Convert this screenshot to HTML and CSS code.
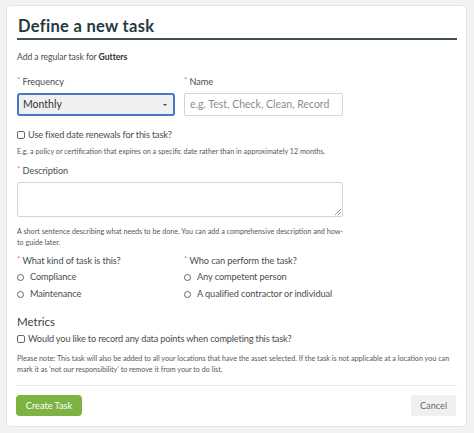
FILE: index.html
```html
<!DOCTYPE html>
<html>
<head>
<meta charset="utf-8">
<link rel="stylesheet" href="styles.css">
</head>
<body>
<div class="card">
  <h1 class="title">Define a new task</h1>
  <p class="intro">Add a regular task for <b>Gutters</b></p>

  <div class="grid2 row-fields">
    <div class="field">
      <div class="label"><span class="req">*</span> Frequency</div>
      <div class="select">Monthly<span class="caret"></span></div>
    </div>
    <div class="field">
      <div class="label"><span class="req">*</span> Name</div>
      <div class="input placeholder">e.g. Test, Check, Clean, Record</div>
    </div>
  </div>

  <div class="check row-fixed"><span class="box"></span>Use fixed date renewals for this task?</div>
  <p class="hint hint-fixed">E.g. a policy or certification that expires on a specific date rather than in approximately 12 months.</p>

  <div class="label label-desc"><span class="req">*</span> Description</div>
  <div class="textarea"><span class="grip"></span></div>
  <p class="hint hint-desc">A short sentence describing what needs to be done. You can add a comprehensive description and how-to guide later.</p>

  <div class="grid2 row-radios">
    <div class="field">
      <div class="label"><span class="req">*</span> What kind of task is this?</div>
      <div class="radio"><span class="dot"></span>Compliance</div>
      <div class="radio"><span class="dot"></span>Maintenance</div>
    </div>
    <div class="field">
      <div class="label"><span class="req">*</span> Who can perform the task?</div>
      <div class="radio"><span class="dot"></span>Any competent person</div>
      <div class="radio"><span class="dot"></span>A qualified contractor or individual</div>
    </div>
  </div>

  <h2 class="section">Metrics</h2>
  <div class="check row-metrics"><span class="box"></span>Would you like to record any data points when completing this task?</div>
  <p class="hint hint-note">Please note: This task will also be added to all your locations that have the asset selected. If the task is not applicable at a location you can mark it as 'not our responsibility' to remove it from your to do list.</p>

  <div class="actions">
    <button class="btn btn-primary">Create Task</button>
    <button class="btn btn-cancel">Cancel</button>
  </div>
</div>
</body>
</html>
```
FILE: styles.css
```css
* { box-sizing: border-box; }
html, body { margin: 0; padding: 0; }
body {
  background: #f2f2f2;
  font-family: "Lato", "Noto Sans", sans-serif;
  color: #4a4d50;
  width: 474px;
  height: 433px;
  overflow: hidden;
}
.card {
  margin: 5px 7px 0 6px;
  height: 422px;
  background: #fff;
  border: 1px solid #e3e3e3;
  border-radius: 4px;
  padding: 9px 9px 0 10px;
}
.title {
  margin: 0;
  font-size: 16.5px;
  line-height: 23px;
  font-weight: 700;
  color: #1f3a40;
  border-bottom: 2px solid #3f5157;
  padding-left: 1px;
  letter-spacing: 0.3px;
}
.intro {
  margin: 10px 0 0;
  font-size: 8.6px;
  line-height: 14px;
  letter-spacing: -0.05px;
}
.intro b { color: #2b3033; }
.grid2 {
  display: grid;
  grid-template-columns: 158px 159px;
  column-gap: 9px;
}
.row-fields { margin-top: 9px; }
.label {
  font-size: 9.2px;
  line-height: 14px;
  letter-spacing: -0.1px;
  color: #4a4d50;
}
.req { color: #e07a7a; font-size: 8px; vertical-align: 2px; }
.select, .input {
  margin-top: 4px;
  height: 23px;
  font-size: 10.5px;
  line-height: 19px;
  padding: 0 5px;
  border-radius: 3px;
}
.select {
  position: relative;
  background: #f0f0f0;
  border: 2px solid #4778c4;
  color: #2f3336;
  padding-left: 4px;
}
.caret {
  position: absolute;
  right: 6px;
  top: 9px;
  width: 0; height: 0;
  border-left: 2px solid transparent;
  border-right: 2px solid transparent;
  border-top: 2px solid #444;
}
.input {
  border: 1px solid #d5d5d5;
  line-height: 21px;
  border-radius: 2px;
}
.placeholder { color: #8a8d90; }
.check {
  display: flex;
  align-items: center;
  font-size: 9.2px;
  line-height: 14px;
  letter-spacing: -0.15px;
  color: #4a4d50;
}
.box {
  width: 8px; height: 8px;
  border: 1px solid #666;
  border-radius: 2px;
  margin-right: 3px;
  flex: none;
}
.row-fixed { margin-top: 12px; }
.hint {
  margin: 0;
  font-size: 7.2px;
  line-height: 11px;
  color: #55595c;
}
.hint-fixed { margin-top: 4px; }
.label-desc { margin-top: 5px; }
.textarea {
  position: relative;
  margin-top: 4px;
  width: 326px;
  height: 35px;
  border: 1px solid #d5d5d5;
  border-radius: 2px;
}
.grip {
  position: absolute;
  right: 1px; bottom: 1px;
  width: 6px; height: 6px;
  background: linear-gradient(135deg, transparent 45%, #999 45%, #999 55%, transparent 55%, transparent 72%, #999 72%, #999 82%, transparent 82%);
}
.hint-desc { margin-top: 9px; width: 330px; }
.row-radios { margin-top: 4px; }
.radio {
  display: flex;
  align-items: center;
  margin-top: 3px;
  font-size: 9.2px;
  line-height: 14px;
  letter-spacing: -0.1px;
}
.label + .radio { margin-top: 2px; }
.dot {
  width: 7px; height: 7px;
  border: 1px solid #666;
  border-radius: 50%;
  margin-right: 6px;
  flex: none;
}
.section {
  margin: 12px 0 0;
  font-size: 11.5px;
  line-height: 18px;
  font-weight: 400;
  color: #3c4245;
}
.row-metrics { margin-top: 1px; }
.hint-note { margin-top: 7px; max-width: 436px; }
.actions {
  display: flex;
  justify-content: space-between;
  align-items: center;
  margin-top: 10px;
  border-top: 1px solid #e6e6e6;
  padding-top: 9px;
}
.btn {
  font-family: inherit;
  font-size: 9.2px;
  height: 21px;
  border: none;
  border-radius: 4px;
  padding: 0 11px;
}
.btn-primary {
  background: #7db343;
  color: #fff;
  width: 66px;
  padding: 0;
  margin-left: -1px;
}
.btn-cancel {
  background: #f0f0f0;
  color: #666a6d;
  width: 45px;
  padding: 0;
  margin-right: 1px;
  border-radius: 2px;
}
```
